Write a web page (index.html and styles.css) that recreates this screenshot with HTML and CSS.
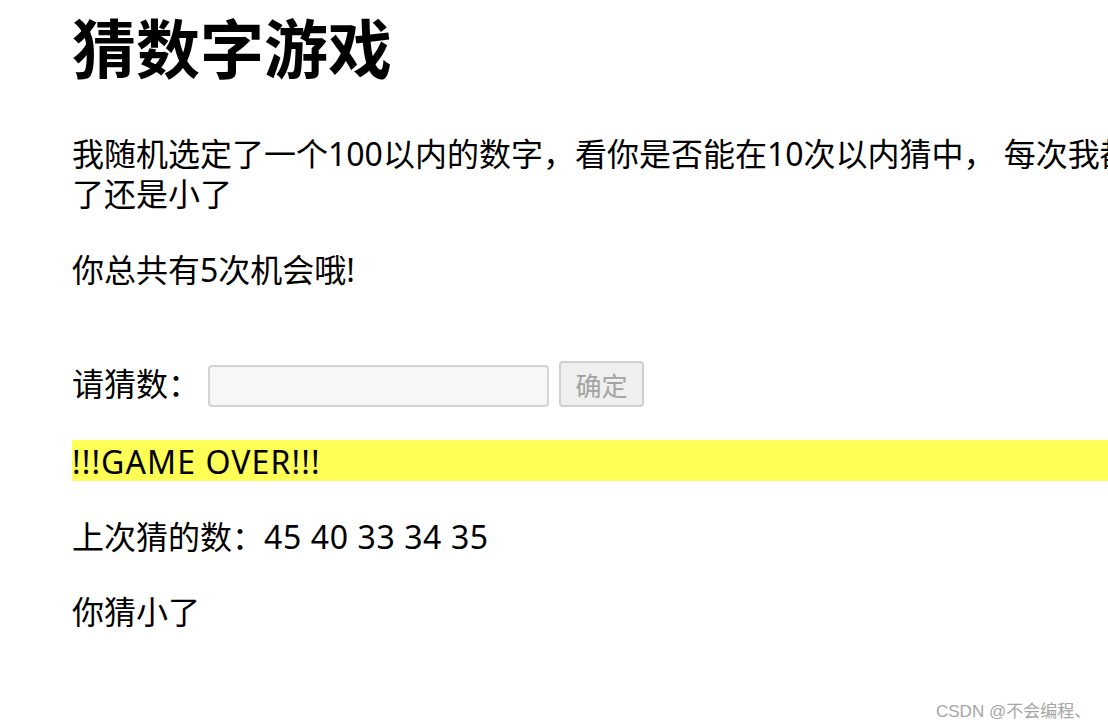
FILE: index.html
```html
<!DOCTYPE html>
<html lang="zh-CN">
<head>
<meta charset="utf-8">
<title>猜数字游戏</title>
<link rel="stylesheet" href="styles.css">
</head>
<body>
<main class="page">
  <h1 class="title">猜数字游戏</h1>
  <p class="intro">我随机选定了一个100以内的数字，看你是否能在10次以内猜中， 每次我都<br>了还是小了</p>
  <p class="chances">你总共有5次机会哦!</p>
  <div class="form-row">
    <label class="label" for="guess">请猜数：</label>
    <input class="guess-field" id="guess" type="text" disabled>
    <button class="guess-submit" type="button" disabled>确定</button>
  </div>
  <p class="game-over">!!!GAME OVER!!!</p>
  <p class="guesses">上次猜的数：<span class="nums">45 40 33 34 35</span></p>
  <p class="hint">你猜小了</p>
</main>
<div class="watermark">CSDN @不会编程、</div>
</body>
</html>
```
FILE: styles.css
```css
html, body {
  margin: 0;
  padding: 0;
  overflow: hidden;
  background: #fff;
}
body {
  width: 1108px;
  height: 727px;
  position: relative;
  font-family: "Noto Sans", "Noto Sans CJK SC", sans-serif;
  color: #000;
}
.page {
  padding-left: 72px;
  padding-top: 3px;
}
.title {
  margin: 0;
  font-family: "Noto Sans CJK SC", sans-serif;
  font-size: 64px;
  font-weight: 700;
  line-height: 84px;
}
.page p {
  font-size: 32px;
  line-height: 40px;
  margin: 0;
}
.intro {
  white-space: nowrap;
  margin-top: 47px !important;
}
.chances {
  margin-top: 36px !important;
}
.form-row {
  display: flex;
  align-items: center;
  height: 46px;
  margin-top: 71px;
  font-size: 32px;
}
.label {
  line-height: 40px;
  margin-right: 8px;
}
.guess-field {
  box-sizing: border-box;
  width: 341px;
  height: 42px;
  margin: 4px 0 0 0;
  border: 2px solid #d4d4d4;
  border-radius: 4px;
  background: #f7f7f7;
  padding: 0 4px;
}
.guess-submit {
  box-sizing: border-box;
  width: 85px;
  height: 46px;
  margin: 0 0 0 10px;
  border: 2px solid #d0d0d0;
  border-radius: 4px;
  background: #efefef;
  color: #a3a3a3;
  font-family: "Noto Sans CJK SC", sans-serif;
  font-size: 26px;
  padding: 0;
}
.page .game-over {
  background: #ffff55;
  margin-top: 33px;
  height: 41px;
  line-height: 43px;
  letter-spacing: 1.1px;
}
.page .guesses {
  margin-top: 36px;
}
.nums {
  letter-spacing: 0.6px;
}
.page .hint {
  margin-top: 35px;
}
.watermark {
  position: absolute;
  left: 936px;
  top: 697px;
  font-family: "Liberation Sans", "Noto Sans CJK SC", sans-serif;
  font-size: 17px;
  color: #a6a6a6;
  white-space: nowrap;
}
```
